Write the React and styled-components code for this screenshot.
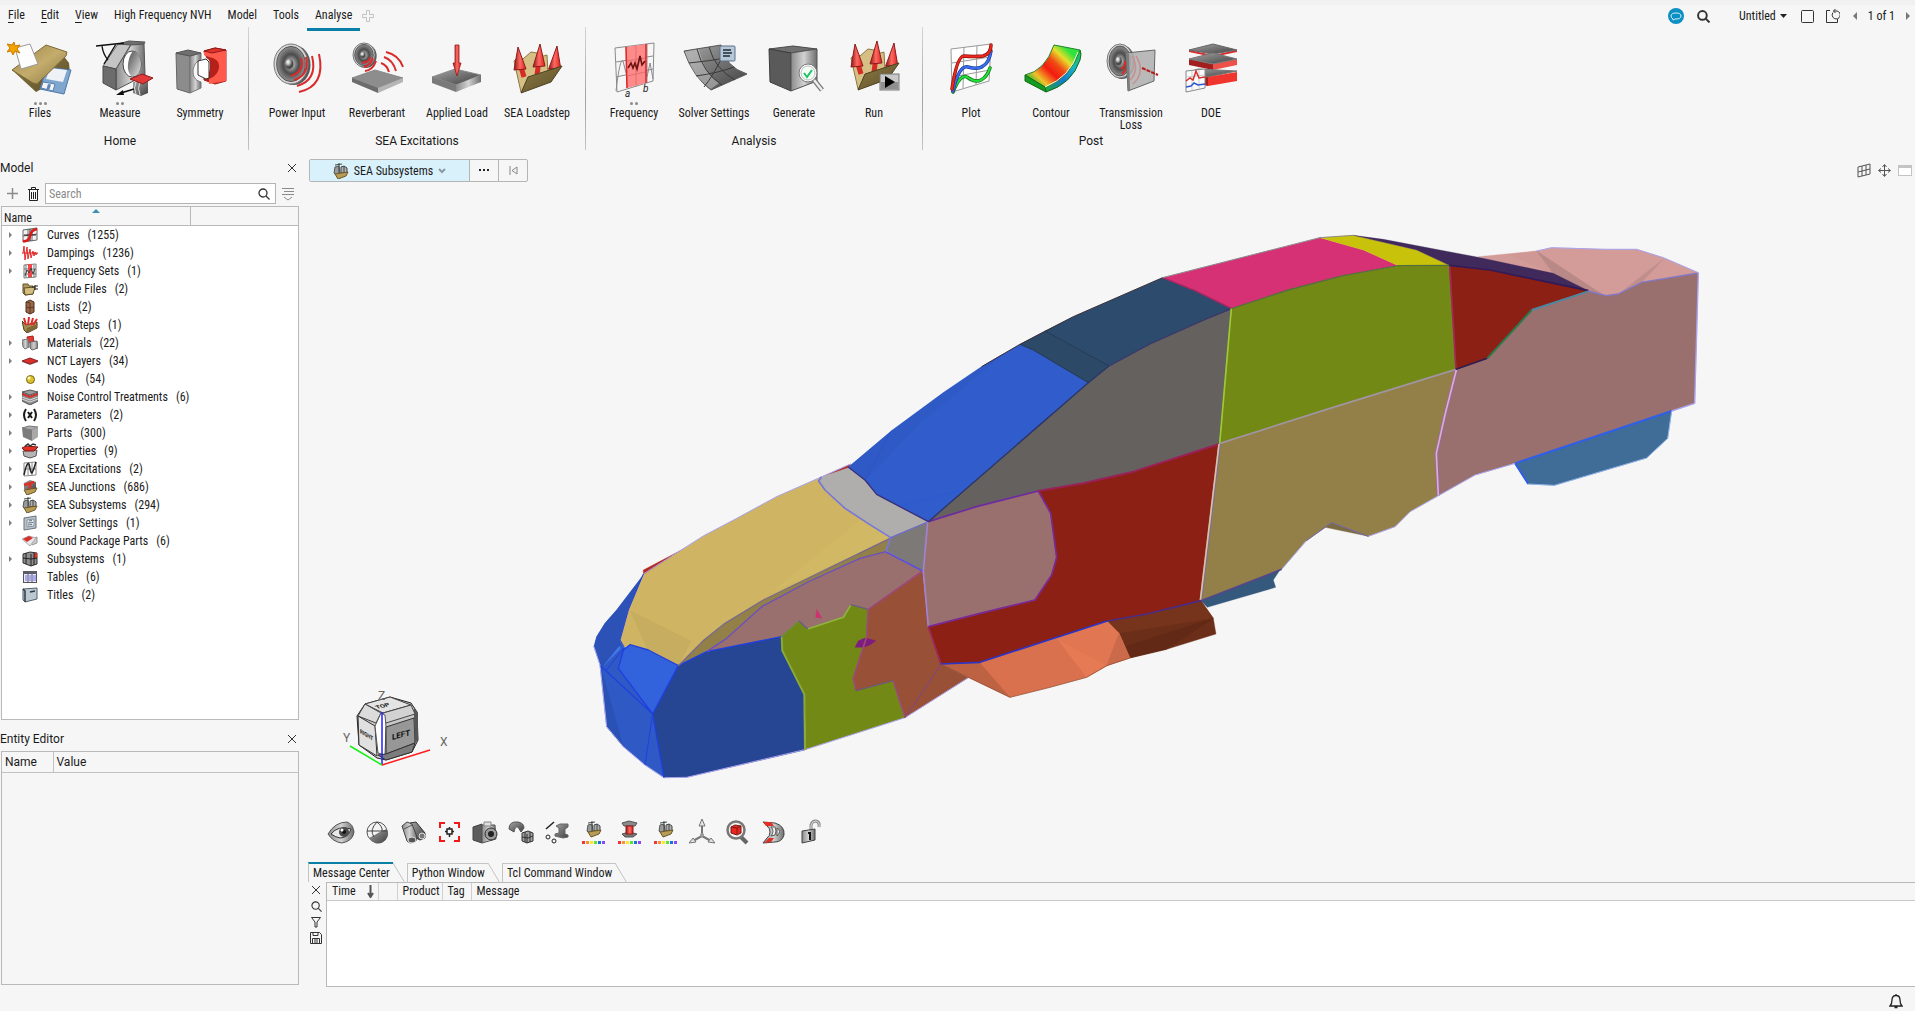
import styled, { createGlobalStyle } from "styled-components";

const GlobalStyle = createGlobalStyle`
  * {
    box-sizing: border-box;
  }

  body {
    margin: 0;
    background: #f6f6f6;
    color: #1a1a1a;
    font-family: "Roboto Condensed", Roboto, "Liberation Sans", sans-serif;
    font-size: 12px;
    line-height: 18px;
  }

  button {
    padding: 0;
    border: 0;
    background: none;
    color: inherit;
    font: inherit;
    cursor: pointer;
  }

  svg {
    display: block;
    flex: none;
  }
`;

const Window = styled.div`
  min-height: 100vh;
  display: flex;
  flex-direction: column;
`;

const TitleStrip = styled.div`
  height: 5px;
  background: #f1f1f1;
`;

/* ---------- menu ---------- */

const MenuBar = styled.header`
  height: 26px;
  display: flex;
  align-items: stretch;
  justify-content: space-between;
`;

const Menus = styled.nav`
  display: flex;
  align-items: stretch;
`;

const MenuButton = styled.button`
  padding: 1px 8px 4px;
  border-bottom: 3px solid ${(p) => (p.$active ? "#0a7fa6" : "transparent")};

  u {
    text-underline-offset: 3px;
  }
`;

const AddPage = styled.button`
  padding: 0 2px 4px;
  display: flex;
  align-items: center;
`;

const SessionBar = styled.div`
  height: 22px;
  padding-right: 5px;
  display: flex;
  align-items: center;
`;

const IconButton = styled.button`
  display: flex;
  align-items: center;
  justify-content: center;
  gap: 4px;
  margin-right: ${(p) => p.$after || 0}px;
`;

const PageCount = styled.span`
  margin: 0 11px;
`;

/* ---------- ribbon ---------- */

const Ribbon = styled.div`
  height: 123px;
  display: flex;
`;

const Group = styled.section`
  position: relative;
  padding: 8px 9px 0 ${(p) => (p.$first ? 0 : 8)}px;
  display: flex;
  flex-direction: column;
  justify-content: space-between;

  &:not(:last-child)::after {
    content: "";
    position: absolute;
    right: 0;
    top: -4px;
    bottom: 4px;
    width: 1px;
    background: linear-gradient(#d4d4d4, #a2a2a2 60%, #c4c4c4);
  }
`;

const GroupTools = styled.div`
  display: flex;
  align-items: flex-start;
`;

const GroupLabel = styled.h2`
  margin: 0 0 4px;
  font-family: Roboto, "Liberation Sans", sans-serif;
  font-size: 12px;
  font-weight: 400;
  line-height: 18px;
  text-align: center;
`;

const Tool = styled.button`
  width: 80px;
  display: flex;
  flex-direction: column;
  align-items: center;
  line-height: 12px;
`;

const Dots = styled.span`
  height: 8px;
  display: flex;
  align-items: center;
  gap: 2px;

  i {
    width: 3px;
    height: 3px;
    border-radius: 50%;
    background: #8a8a8a;
  }
`;

/* ---------- main area ---------- */

const Workspace = styled.div`
  flex: 1;
  display: flex;
`;

const Sidebar = styled.aside`
  width: 300px;
  flex: none;
  padding: 4px 1px 2px 0;
  display: flex;
  flex-direction: column;
`;

const PanelHead = styled.div`
  height: 20px;
  margin-top: ${(p) => (p.$spaced ? 9 : 0)}px;
  padding-right: 1px;
  display: flex;
  align-items: center;
  justify-content: space-between;

  h2 {
    margin: 0;
    font-family: Roboto, "Liberation Sans", sans-serif;
    font-size: 12px;
    font-weight: 400;
  }
`;

const SearchRow = styled.div`
  height: 28px;
  padding: 5px 5px 2px 7px;
  display: flex;
  align-items: center;
`;

const SearchBox = styled.label`
  flex: 1;
  height: 21px;
  margin: 0 6px;
  padding: 0 5px 0 3px;
  display: flex;
  align-items: center;
  background: #fff;
  border: 1px solid #b4b4b4;

  input {
    flex: 1;
    min-width: 0;
    padding: 0;
    border: 0;
    outline: 0;
    font: inherit;
  }

  input::placeholder {
    color: #8a8a8a;
  }
`;

const TreeBox = styled.div`
  height: 514px;
  margin-left: 1px;
  background: #fff;
  border: 1px solid #b9b9b9;
`;

const TreeTable = styled.table`
  width: 100%;
  border-collapse: collapse;
  table-layout: fixed;

  th {
    position: relative;
    height: 18px;
    padding: 3px 2px 0;
    background: #f6f6f6;
    border-bottom: 1px solid #b9b9b9;
    font-weight: 400;
    line-height: 14px;
    text-align: left;
    vertical-align: bottom;
  }

  th:first-child {
    width: 188px;
    border-right: 1px solid #b9b9b9;
  }

  td {
    height: 18px;
    padding: 0;
  }
`;

const SortMark = styled.span`
  position: absolute;
  left: 50%;
  top: 2px;
  margin-left: -4px;
  border: 4px solid transparent;
  border-top: 0;
  border-bottom: 4px solid #3f8fb3;
`;

const TreeItem = styled.div`
  height: 18px;
  padding-left: 4px;
  display: flex;
  align-items: center;
  white-space: nowrap;

  > svg {
    margin-right: 9px;
  }
`;

const Expander = styled.button`
  width: 16px;
  height: 18px;
  display: flex;
  align-items: center;
  padding-left: 3px;
  visibility: ${(p) => (p.$hidden ? "hidden" : "visible")};
`;

const Count = styled.span`
  margin-left: 8px;
`;

const EditorBox = styled.div`
  flex: 1;
  margin: 2px 0 24px 1px;
  border: 1px solid #b9b9b9;
`;

const EditorTable = styled.table`
  width: 100%;
  border-collapse: collapse;

  th {
    height: 20px;
    padding: 0 3px;
    border-bottom: 1px solid #c2c2c2;
    font-family: Roboto, "Liberation Sans", sans-serif;
    font-weight: 400;
    text-align: left;
  }

  th:first-child {
    width: 51px;
    border-right: 1px solid #c2c2c2;
  }
`;

const Content = styled.main`
  flex: 1;
  min-width: 0;
  padding: 5px 0 0 8px;
  display: flex;
  flex-direction: column;
`;

const ViewBar = styled.div`
  height: 23px;
  padding: 0 3px 0 1px;
  display: flex;
  align-items: center;
  justify-content: space-between;
`;

const ViewTabs = styled.div`
  height: 23px;
  display: flex;
  border: 1px solid #b5b5b5;
  border-radius: 2px;
`;

const ViewTab = styled.button`
  width: ${(p) => p.$width}px;
  display: flex;
  align-items: center;
  justify-content: center;
  gap: 5px;
  background: ${(p) => (p.$active ? "#d9f1fb" : "transparent")};

  & + & {
    border-left: 1px solid #b5b5b5;
  }
`;

const ViewActions = styled.div`
  display: flex;
  align-items: center;
  gap: 7px;
`;

const Scene = styled.div`
  flex: 1;
  min-height: 0;

  svg {
    width: 100%;
    height: 100%;
  }
`;

const DisplayBar = styled.div`
  height: 40px;
  padding-left: 15px;
  display: flex;
  align-items: center;
`;

const DisplayButton = styled.button`
  width: 36px;
  height: 30px;
  display: flex;
  align-items: center;
  justify-content: center;
`;

const DockTabs = styled.div`
  margin-top: 10px;
  height: 20px;
  display: flex;
  align-items: flex-end;
  gap: 3px;
`;

const DockTab = styled.button`
  position: relative;
  height: ${(p) => (p.$active ? 20 : 19)}px;
  padding: 0 3px 0 4px;
  margin-right: 11px;
  border-left: 1px solid #c4c4c4;
  border-top: ${(p) => (p.$active ? "2px solid #0a7fa6" : "1px solid #c4c4c4")};

  svg {
    position: absolute;
    left: 100%;
    top: -1px;
  }
`;

const Dock = styled.div`
  height: 105px;
  display: flex;
`;

const DockSide = styled.div`
  width: 18px;
  padding: 2px 2px 0 0;
  display: flex;
  flex-direction: column;
  align-items: center;
  gap: 4px;

  button {
    height: 12px;
  }
`;

const LogBox = styled.div`
  flex: 1;
  background: #fff;
  border: 1px solid #b9b9b9;
  border-right: 0;
`;

const LogTable = styled.table`
  width: 100%;
  border-collapse: collapse;
  table-layout: fixed;
  background: #f6f6f6;

  th {
    height: 17px;
    padding: 1px 0 0 5px;
    border-bottom: 1px solid #c8c8c8;
    border-right: 1px solid #d0d0d0;
    font-weight: 400;
    line-height: 15px;
    text-align: left;
  }

  th:last-child {
    border-right: 0;
  }
`;

const TimeHead = styled.span`
  display: flex;
  align-items: center;
  justify-content: space-between;
  padding-right: 4px;
`;

const StatusBar = styled.footer`
  height: 24px;
  padding: 5px 12px 0 0;
  display: flex;
  align-items: center;
  justify-content: flex-end;
`;

/* ---------- shared drawing parts ---------- */

const DefsCanvas = styled.svg`
  position: absolute;
`;

function Defs() {
  return (
    <DefsCanvas width="0" height="0" aria-hidden="true">
      <defs>
        <linearGradient id="tan" x1="0" y1="0" x2="1" y2="1">
          <stop offset="0" stopColor="#9c8444" />
          <stop offset=".5" stopColor="#c4ad6c" />
          <stop offset="1" stopColor="#8a7540" />
        </linearGradient>
        <linearGradient id="tanDark" x1="0" y1="0" x2="1" y2="1">
          <stop offset="0" stopColor="#8d7a45" />
          <stop offset="1" stopColor="#5d4f28" />
        </linearGradient>
        <linearGradient id="steel" x1="0" y1="0" x2="1" y2="0">
          <stop offset="0" stopColor="#8b8b8b" />
          <stop offset=".5" stopColor="#d2d2d2" />
          <stop offset="1" stopColor="#6d6d6d" />
        </linearGradient>
        <linearGradient id="steelDark" x1="0" y1="0" x2="1" y2="1">
          <stop offset="0" stopColor="#a5a5a5" />
          <stop offset="1" stopColor="#3f3f3f" />
        </linearGradient>
        <linearGradient id="bore" x1="0" y1="0" x2="1" y2="1">
          <stop offset="0" stopColor="#4f4f4f" />
          <stop offset="1" stopColor="#e6e6e6" />
        </linearGradient>
        <linearGradient id="red" x1="0" y1="0" x2="1" y2="0">
          <stop offset="0" stopColor="#8d1717" />
          <stop offset=".5" stopColor="#ff6a62" />
          <stop offset="1" stopColor="#d9201c" />
        </linearGradient>
        <linearGradient id="heat" gradientUnits="userSpaceOnUse" x1="14" y1="44" x2="50" y2="6">
          <stop offset="0" stopColor="#32b62c" />
          <stop offset=".17" stopColor="#f0c22a" />
          <stop offset=".4" stopColor="#f31a10" />
          <stop offset=".58" stopColor="#f04a14" />
          <stop offset=".76" stopColor="#e9de2a" />
          <stop offset=".93" stopColor="#2fe33c" />
        </linearGradient>
        <linearGradient id="heatEdge" x1="0" y1="1" x2="1" y2="0">
          <stop offset="0" stopColor="#1fae2c" />
          <stop offset=".4" stopColor="#1579d0" />
          <stop offset=".7" stopColor="#18b6c4" />
          <stop offset="1" stopColor="#22c43c" />
        </linearGradient>
        <radialGradient id="cone">
          <stop offset="0" stopColor="#f4f4f4" />
          <stop offset=".3" stopColor="#8a8a8a" />
          <stop offset=".55" stopColor="#4c4c4c" />
          <stop offset="1" stopColor="#8f8f8f" />
        </radialGradient>
        <radialGradient id="ball" cx=".35" cy=".3">
          <stop offset="0" stopColor="#fff" />
          <stop offset=".5" stopColor="#b5b5b5" />
          <stop offset="1" stopColor="#4a4a4a" />
        </radialGradient>
      </defs>
    </DefsCanvas>
  );
}

const poly = (fill, points, stroke) => (
  <polygon key={points} points={points} fill={fill} stroke={stroke} strokeLinejoin="round" />
);

function LoadFolder({ dy = 0 }) {
  const arrows = [
    [14, 8, 20, 38],
    [36, 5, 33, 36],
    [53, 7, 46, 33],
  ];
  return (
    <g transform={`translate(0 ${dy})`}>
      {poly("#d5bf84", "10,22 14,18 19,20 27,13 33,14 36,18 43,16 44,34 17,53", "#8d7742")}
      {arrows.map(([x, y, bx, by]) => (
        <g key={x}>
          <line x1={x + (bx - x) * 0.5} y1={y + 20} x2={bx} y2={by} stroke="#d52a26" strokeWidth="5" />
          {poly("url(#red)", `${x},${y} ${x + 6 + (bx - x) / 3},${y + 22} ${x - 6 + (bx - x) / 3},${y + 23}`, "#8f1b1b")}
        </g>
      ))}
      {poly("url(#tanDark)", "24,38 58,27 47,43 17,54", "#4c4122")}
    </g>
  );
}

function Speaker({ cx, cy, rx, ry }) {
  return (
    <g>
      <ellipse cx={cx + rx * 0.15} cy={cy + 1} rx={rx} ry={ry} fill="#5a5a5a" />
      <ellipse cx={cx} cy={cy} rx={rx} ry={ry} fill="#d6d6d6" stroke="#777" />
      <ellipse cx={cx} cy={cy} rx={rx * 0.84} ry={ry * 0.88} fill="url(#cone)" stroke="#555" />
      <ellipse cx={cx - rx * 0.1} cy={cy} rx={rx * 0.25} ry={ry * 0.25} fill="url(#ball)" />
    </g>
  );
}

/* ribbon pictures share a 66 x 60 canvas */
const ribbonArt = {
  Files: (
    <>
      {poly("url(#tanDark)", "5,31 29,53 63,34 62,24 56,16")}
      {poly("#7fa6cf", "40,28 64,31 57,55 33,50", "#4d78a8")}
      {poly("#eef1f5", "43,29 60,31 56,43 39,40")}
      {poly("#f4f4f4", "36,43 48,45 46,52 34,49", "#567fae")}
      <path d="M41 45l3 .5-1.500 5-3-.5z" fill="#5d86b5" />
      {poly("url(#tan)", "5,31 39,6 60,13 59,17 30,45 26,44", "#7d6936")}
      {poly("#fdfdfd", "8,9 23,5 31,25 14,30", "#9a9a9a")}
      {poly("#f5a300", "7,3 8,7 13,6 10,10 13,14 8,12 6,16 4,12 0,13 3,9 0,5 5,6", "#c77a00")}
    </>
  ),
  Measure: (
    <>
      {poly("#c4c4c4", "16,27 31,5 44,5 29,30", "#6a6a6a")}
      {poly("#6f6f6f", "31,5 42,2 58,3 57,5 44,6", "#555")}
      {poly("url(#steel)", "29,30 44,6 57,5 58,36 29,51", "#555")}
      {poly("#6c6c6c", "16,27 29,30 29,51 16,44", "#4a4a4a")}
      <ellipse cx="45" cy="25" rx="9" ry="13" fill="#fff" stroke="#444" />
      <path d="M46 12q8 2 8 13t-9 13q-5-5-4-13t5-13" fill="url(#bore)" />
      <path d="M9 7l28-3M21 21q-5-6-6-14M29 5L17 25" stroke="#111" strokeWidth="1.400" fill="none" />
      <path d="M46 43l15-1v12l-7 3-8-3z" fill="url(#steelDark)" />
      <path d="M49 43q-3 6 0 12M53 43q-3 6 0 13" stroke="#ddd" fill="none" />
      {poly("#e03a3a", "43,40 55,35 66,39 56,45", "#8f1b1b")}
      <path d="M47 50L34 54" stroke="#111" strokeWidth="1.500" />
      {poly("#111", "29,56 36,51 37,56")}
    </>
  ),
  Symmetry: (
    <>
      <path d="M9 14l14 3v37l-13-4z" fill="#8c8c8c" stroke="#666" />
      <path d="M23 17l11-3v6c-4 2-8 6-8 13 0 6 4 9 8 10v6l-11 5z" fill="url(#steel)" stroke="#777" />
      {poly("#6f6f6f", "9,14 21,11 34,14 23,17", "#555")}
      <path d="M37 12l11-3 11 2v31l-11 3-11-4v-4l5-14-5-10z" fill="#b5201a" stroke="#a51c18" />
      <path d="M37 12h22v30l-17 3v-5c6-2 10-7 10-13s-5-8-10-9l-5-2z" fill="#ff5a4c" />
      {poly("#e0322b", "37,12 48,9 59,11 45,14", "#8f1b1b")}
      <path d="M37 19c6 0 6 4 6 9s-2 8-6 10z" fill="#f6f6f6" />
      {poly("#fff", "31,22 39,20 42,23 42,39 39,40 31,36", "#333")}
    </>
  ),
  "Power Input": (
    <>
      <Speaker cx={27} cy={25} rx={17} ry={20} />
      <path
        d="M37 19q4 13-10 18M42 18q4 18-12 23M48 17q6 24-15 30M55 15q7 32-20 38"
        fill="none"
        stroke="#d92b2b"
        strokeWidth="2"
      />
    </>
  ),
  Reverberant: (
    <>
      <Speaker cx={20} cy={16} rx={11} ry={12} />
      <path
        d="M26 18q0 5-8 6M29 19q-2 7-9 9M32 22q-3 9-11 10M42 13q13 3 17 15M40 18q9 3 12 14M37 24q6 2 8 9"
        fill="none"
        stroke="#d92b2b"
        strokeWidth="2"
      />
      {poly("#8d8d8d", "8,39 31,31 59,39 34,49", "#888")}
      {poly("#6c6c6c", "8,39 34,49 34,54 8,43")}
      {poly("#b5b5b5", "34,49 59,39 59,43 34,54")}
    </>
  ),
  "Applied Load": (
    <>
      {poly("url(#steelDark)", "8,38 31,30 57,36 32,46", "#8a8a8a")}
      {poly("#7a7a7a", "8,38 32,46 32,53 8,44")}
      {poly("url(#steel)", "32,46 57,36 57,43 32,53")}
      <path d="M31 6h4v18h2l-4 13-4-13h2z" fill="url(#red)" stroke="#8f1b1b" strokeWidth=".8" />
    </>
  ),
  "SEA Loadstep": <LoadFolder />,
  Frequency: (
    <>
      <path
        d="M14 9l39-5-1 38-36 11zM15 23l37-6M15 38l37-8M35 6v42M46 5v39M15 52q4-34 7-30l3 12M46 38l3-14 3 16"
        fill="none"
        stroke="#8b8b8b"
      />
      {poly("#ff8a8a", "25,8 45,5 45,44 26,49")}
      <path d="M25 8l1 41M45 5v39" stroke="#d92b2b" strokeWidth="1.600" />
      <path d="M26 22l18-3M26 37l18-4M35 7v39" stroke="#dd7070" />
      <path d="M27 29l3-5 2 5 2-5 2 6 3-13 2 9 3-4" fill="none" stroke="#6e1111" strokeWidth="1.600" />
      <g fontFamily="Roboto" fontSize="10" fontStyle="italic" fill="#222">
        <text x="24" y="58">a</text>
        <text x="42" y="53">b</text>
      </g>
    </>
  ),
  "Solver Settings": (
    <>
      <path d="M3 12L40 6q4 22 26 29L30 51Q12 38 3 12z" fill="url(#steelDark)" stroke="#555" />
      <path d="M4 13l14-3q5 24 20 34l-8 6Q12 38 4 13z" fill="#c5c5c5" opacity=".55" />
      <path d="M16 10q6 24 25 36M28 8q6 22 26 33M8 24q20-2 37-5M15 37q22-3 38-9M43 14q-10 22-20 34" fill="none" stroke="#3a3a3a" />
      <rect x="39" y="7" width="15" height="15" rx="1" fill="#b6c8d8" stroke="#5b7187" />
      <path d="M42 11h8M42 14h9M42 17h7" stroke="#1e2a36" strokeWidth="1.500" />
    </>
  ),
  Generate: (
    <>
      {poly("#707070", "8,10 32,7 56,10 30,14", "#4b4b4b")}
      {poly("#5a5a5a", "8,10 30,14 30,52 9,43", "#3e3e3e")}
      {poly("url(#steel)", "30,14 56,10 56,42 30,52", "#555")}
      <path d="M53 41l8 10" stroke="#777" strokeWidth="5" />
      <path d="M53 41l8 10" stroke="#eee" strokeWidth="2.500" />
      <circle cx="47" cy="34" r="9" fill="#fff" stroke="#777" />
      <circle cx="47" cy="34" r="7" fill="#f4fff6" stroke="#bbb" />
      <path d="M43 34l3 4 5-7" fill="none" stroke="#1fc36a" strokeWidth="2" />
    </>
  ),
  Run: (
    <>
      <LoadFolder dy={-3} />
      <rect x="39" y="35" width="19" height="16" fill="#c8c8c8" stroke="#777" />
      <rect x="40" y="43" width="17" height="7" fill="#8f8f8f" />
      {poly("#000", "44,37 54,43 44,49")}
    </>
  ),
  Plot: (
    <>
      <path
        d="M13 10l40-5-2 37-37 11zM14 24l38-6M14 38l38-7M26 8l-1 41M39 7l-1 39"
        fill="#fff"
        stroke="#999"
      />
      <g fill="none" strokeLinecap="round">
        <path d="M15 53q7-18 14-15 8 6 14 3 6-3 9-12" stroke="#127a1a" strokeWidth="3.500" />
        <path d="M15 53q7-18 14-15 8 6 14 3 6-3 9-12" stroke="#22e03a" strokeWidth="2" />
        <path d="M15 52q6-26 15-24 11 3 15-1 6-3 8-15" stroke="#1c3f9c" strokeWidth="3.500" />
        <path d="M15 52q6-26 15-24 11 3 15-1 6-3 8-15" stroke="#3a6ef0" strokeWidth="2" />
        <path d="M14 50q5-33 12-33 10 1 19 0 8-2 8-11" stroke="#8c140f" strokeWidth="3.500" />
        <path d="M14 50q5-33 12-33 10 1 19 0 8-2 8-11" stroke="#f0281c" strokeWidth="2" />
      </g>
    </>
  ),
  Contour: (
    <>
      <path d="M62 11q2 3 0 10-8 24-34 32l-1-5Q54 36 62 11z" fill="url(#heatEdge)" stroke="#12691d" />
      <path d="M7 36Q27 32 36 6l26 5q-8 26-35 38z" fill="url(#heat)" stroke="#23812a" />
      {poly("#149c22", "7,36 27,48 28,53 7,42", "#0d6b16")}
      <path d="M27 48Q52 38 60 13" fill="none" stroke="#eef6ee" />
    </>
  ),
  "Transmission Loss": (
    <>
      <Speaker cx={22} cy={22} rx={13} ry={17} />
      <path d="M27 22q1 5-4 8M29 26q0 5-5 9" fill="none" stroke="#d92b2b" strokeWidth="2" />
      <polygon points="28,14 57,11 56,42 30,52" fill="#b0b0b0" fillOpacity=".88" stroke="#666" />
      {poly("#7d7d7d", "28,14 31,15 32,51 30,52")}
      <path d="M34 17q8 14-2 24M38 17q10 16-3 28" fill="none" stroke="#c98e8e" strokeWidth="1.500" />
      <path d="M44 29l16 7" stroke="#b51c1c" strokeWidth="2" strokeDasharray="4 1" />
    </>
  ),
  DOE: (
    <>
      {poly("#d92b2b", "11,11 35,16 59,11 59,13 35,18 11,13")}
      {poly("url(#steelDark)", "11,11 35,5 59,11 35,15", "#666")}
      {poly("#a31f1f", "11,20 35,25 35,31 11,26")}
      {poly("#f0504a", "35,25 59,20 59,26 35,31")}
      {poly("url(#steelDark)", "11,20 35,14 59,20 35,25", "#777")}
      {poly("#a31f1f", "11,33 30,37 30,47 11,43")}
      {poly("url(#steelDark)", "11,33 20,30 59,32 30,38", "#777")}
      {poly("#f0352f", "30,38 59,33 59,42 30,47")}
      {poly("#fbfbfb", "8,32 27,30 27,49 8,53", "#888")}
      <path d="M14 32v20M21 31v20M8 38l19-2" stroke="#bbb" strokeWidth=".7" />
      <path d="M8 42l4-3 3 2 3-9 3 7 6-1" fill="none" stroke="#d92b2b" strokeWidth="1.500" />
      <path d="M8 48l5-1 3-3 4 2 7-1" fill="none" stroke="#2f55d0" strokeWidth="1.500" />
    </>
  ),
};

/* tree pictures share a 16 x 16 canvas */
const folderBase = poly("#b89b55", "2,11 15,9 13,13 5,16", "#6b5828");
const treeArt = {
  Curves: (
    <>
      <path d="M1 3l14-2v12L1 15zM1 9l14-2M6 2v12M10 2v12" fill="#f2f2f2" stroke="#666" />
      <path d="M8 2v12M2 8h12" stroke="#222" />
      <path d="M1 14q6 1 7-5t7-7" fill="none" stroke="#e01818" strokeWidth="2.500" />
    </>
  ),
  Dampings: <path d="M1 8L2 1l1 14L5 2l1 12L8 4l1 9 2-7 1 5 1-4 1 3 1-2M0 8h16" fill="none" stroke="#e02a2a" />,
  "Frequency Sets": (
    <>
      <path d="M2 2l12-1v13L2 15zM2 6h12M2 11h12M4 2v12M12 2v12" fill="none" stroke="#777" />
      <path d="M6 1h4v13H6z" fill="#f04848" />
      <path d="M3 13l2-6 2 3 2-5 2 6 2-5" fill="none" stroke="#444" />
    </>
  ),
  "Include Files": (
    <>
      {poly("#b2985a", "1,3 6,3 7,5 11,5 11,13 3,14 1,12", "#5f5128")}
      {poly("#d3bd80", "2,7 13,6 11,13 3,14", "#5f5128")}
      <path d="M10 6h3M13 4v5M13 5h3M13 8h3" stroke="#222" />
    </>
  ),
  Lists: (
    <>
      {poly("#9a6848", "4,3 8,1 12,3 12,13 8,15 4,13", "#4b2f1e")}
      <path d="M4 3l4 1v11M4 8l4 1 4-1" fill="none" stroke="#5b3a26" />
    </>
  ),
  "Load Steps": (
    <>
      {poly("#a58b4d", "0,4 4,8 15,5 15,11 5,16 2,13", "#4e4220")}
      <path d="M2 1l2 7M7 0l-1 8M11 1L9 8M15 2l-4 6" stroke="#e02a2a" strokeWidth="2" />
      {poly("#7e6a39", "5,11 16,7 13,12 4,16")}
    </>
  ),
  Materials: (
    <>
      {poly("#e8382f", "5,2 11,1 12,7 6,8", "#a01f1a")}
      {poly("url(#steel)", "0,5 6,4 7,12 3,14 1,12", "#777")}
      {poly("url(#steel)", "8,7 15,6 16,13 10,15 8,13", "#666")}
    </>
  ),
  "NCT Layers": (
    <>
      {poly("#8f8f8f", "0,9 8,6 16,9 8,12")}
      {poly("#d9302a", "0,8 8,5 16,8 8,11", "#8e2020")}
    </>
  ),
  Nodes: (
    <>
      <circle cx="8.500" cy="8.500" r="4" fill="#dcc22a" stroke="#77661a" />
      <circle cx="7" cy="7" r="1.500" fill="#fff8c0" />
    </>
  ),
  "Noise Control Treatments": (
    <>
      {poly("#8a8a8a", "0,4 8,7 16,4 16,12 8,16 0,12", "#555")}
      <path d="M0 8l8 3 8-3M0 10l8 3 8-3" fill="none" stroke="#d8d8d8" />
      {poly("#9d9d9d", "0,3 8,1 16,3 8,6", "#555")}
      {poly("#d9302a", "0,4 8,7 16,4 16,6 8,9 0,6")}
    </>
  ),
  Parameters: (
    <g fill="none" stroke="#1a1a1a" strokeWidth="2">
      <path d="M4 2q-4 6 0 12M12 2q4 6 0 12M6 5l4 6M10 5l-4 6" />
    </g>
  ),
  Parts: (
    <>
      {poly("#aaa", "0,3 7,1 16,2 10,5", "#777")}
      {poly("#7c7c7c", "0,3 10,5 10,16 1,12")}
      {poly("#a9a9a9", "10,5 16,2 16,12 10,16")}
    </>
  ),
  Properties: (
    <>
      {poly("#b5b5b5", "1,8 15,7 14,13 8,15 2,13", "#555")}
      {poly("#e03028", "0,5 4,3 16,4 12,8 3,8", "#7c1a16")}
      <path d="M3 3l3-2 2 2 3-2 3 1" fill="none" stroke="#333" strokeWidth="1.500" />
    </>
  ),
  "SEA Excitations": (
    <>
      <path d="M2 2l12-1v13L2 15zM2 8h12M6 2v12M10 2v12" fill="#fff" stroke="#888" />
      <path d="M2 14Q5 0 7 3q2 10 3 9 2-4 4-11" fill="none" stroke="#222" strokeWidth="1.500" />
    </>
  ),
  "SEA Junctions": (
    <>
      {poly("url(#steelDark)", "2,4 8,1 14,3 14,10 6,12 2,10")}
      <path d="M2 6l10-3M8 3v7" stroke="#e03028" strokeWidth="2.500" />
      {folderBase}
    </>
  ),
  "SEA Subsystems": (
    <>
      {poly("#9a9a9a", "2,4 6,3 7,10 4,13 1,10", "#555")}
      {poly("#b0b0b0", "8,4 11,3 14,5 14,10 8,10", "#444")}
      <path d="M2 2l7-1M6 0v10M11 3v7" stroke="#3d4a44" />
      {folderBase}
    </>
  ),
  "Solver Settings": (
    <>
      {poly("#b9c2ca", "2,3 14,1 14,13 2,15", "#67737e")}
      {poly("#e6ebef", "5,5 12,4 12,11 5,12", "#8793a0")}
      <path d="M7 6l3-.5M6 8l5-.5M6 10l4-.5" stroke="#67737e" />
    </>
  ),
  "Sound Package Parts": (
    <>
      {poly("#c9c9c9", "8,6 15,4 15,10 10,12", "#999")}
      {poly("#e8e8e8", "0,6 7,3 14,5 8,13", "#aaa")}
      {poly("#d9302a", "1,6 7,3 11,5 5,9")}
    </>
  ),
  Subsystems: (
    <>
      {poly("#8d8d8d", "1,3 8,1 15,2 15,13 9,15 1,12", "#333")}
      {poly("#e03028", "12,2 15,2 15,7 12,8")}
      <path d="M1 7l8 1 6-1M4 2v11M9 3v12M12 2v12" stroke="#222" fill="none" />
    </>
  ),
  Tables: (
    <>
      <rect x="1.500" y="2.500" width="13" height="11" fill="#e9e9ff" stroke="#555" />
      <rect x="1" y="2" width="14" height="3" fill="#5c5c68" />
      <path d="M6 5v9M10 5v9" stroke="#555" />
      <path d="M3 7h2M3 9h2M3 11h2M7 7h2M7 9h2M7 11h2M11 7h3M11 9h3M11 11h3" stroke="#6a6af0" />
    </>
  ),
  Titles: (
    <>
      {poly("#b9c8d2", "1,2 15,1 15,12 3,15 1,13", "#53616b")}
      <path d="M1 2l2 2v11M8 5l5-1" fill="none" stroke="#2f3a42" strokeWidth="1.500" />
    </>
  ),
};

const Glyph = ({ art, size = 16 }) => (
  <svg width={size} height={size} viewBox="0 0 16 16" aria-hidden="true">
    {art}
  </svg>
);

const swatches = ["#f23535", "#f7913a", "#f5ec2e", "#5be23c", "#1a6fe8", "#8b4cf0"];

const Swatches = () =>
  swatches.map((c, i) => <rect key={c} x={3 + i * 4} y="23" width="3" height="3" fill={c} />);

/* display toolbar pictures share a 28 x 28 canvas */
const displayArt = {
  Visibility: (
    <>
      <path d="M1 16Q8 4 20 4q6 2 7 10-1 9-12 11Q6 24 1 16z" fill="url(#steel)" stroke="#555" />
      <path d="M4 16q7-9 20-5-3 9-11 9-5-1-9-4z" fill="#e9e9e9" stroke="#333" />
      <circle cx="17" cy="14" r="5" fill="#4b4b4b" />
      <circle cx="17" cy="14" r="2" fill="#111" />
      <circle cx="15" cy="12" r="1.500" fill="#fff" />
    </>
  ),
  "Shading mode": (
    <>
      <circle cx="14" cy="14" r="10" fill="#f4f4f4" stroke="#555" />
      <path d="M24 11a10 10 0 0 1-18 9q6-3 9-5 5-3 9-4z" fill="url(#steelDark)" />
      <path d="M4 13h20M14 4q-8 8-3 15M14 4q6 5 5 9" fill="none" stroke="#444" />
    </>
  ),
  Find: (
    <>
      <path d="M11 5l6-1 9 11v5l-5 2-4-2z" fill="url(#steelDark)" stroke="#333" />
      <path d="M3 8l5-4 5 2 5 13-1 4-6 2-3-2z" fill="url(#steel)" stroke="#444" />
      <ellipse cx="13" cy="22" rx="4" ry="3" fill="#555" stroke="#ddd" />
      <ellipse cx="23" cy="18" rx="3" ry="3" fill="#777" stroke="#ddd" />
      <path d="M5 11l8-4" stroke="#555" />
    </>
  ),
  "Fit view": (
    <>
      <path d="M5 10V5h5M19 5h5v5M24 18v5h-5M10 23H5v-5" fill="none" stroke="#f01818" strokeWidth="2" />
      <rect x="12" y="11" width="5" height="5" fill="none" stroke="#222" strokeWidth="1.500" />
      <path d="M14.500 9v2M14.500 16v3M10 13.500h2M17 13.500h2" stroke="#222" strokeWidth="1.500" />
    </>
  ),
  Snapshot: (
    <>
      <path d="M2 9l9-3v19l-9-3z" fill="#5c5c5c" stroke="#444" />
      <path d="M11 7h13l1 14-14 4z" fill="url(#steel)" stroke="#555" />
      <path d="M13 4h7v4h-7z" fill="#ddd" stroke="#888" />
      <circle cx="20" cy="16" r="6" fill="#9c9c9c" stroke="#333" />
      <circle cx="20" cy="16" r="3" fill="#222" />
    </>
  ),
  "Swap representation": (
    <>
      <path d="M2 11q0-8 9-7 6 1 6 6l-3 4-3-5q-3-1-4 5z" fill="url(#steelDark)" stroke="#555" />
      {poly("#a0a0a0", "15,15 21,13 26,15 26,23 20,25 15,23", "#333")}
      <path d="M15 19l6 1 5-2M20 16v9M18 14v10M23 14v10" stroke="#333" fill="none" />
    </>
  ),
  "Element options": (
    <>
      <path d="M3 11l8-7" stroke="#222" strokeWidth="1.500" />
      <circle cx="5" cy="19" r="2" fill="none" stroke="#222" />
      <circle cx="11" cy="23" r="2" fill="none" stroke="#222" />
      <path d="M13 8l4-2h8v3l-3 2v5l3 1v2l-5 1-8-2v-2l4-1v-5z" fill="url(#steelDark)" stroke="#666" />
    </>
  ),
  "Subsystem color": (
    <>
      <g transform="translate(7 3)">{treeArt["SEA Subsystems"]}</g>
      <Swatches />
    </>
  ),
  "Load color": (
    <>
      {poly("#8a8a8a", "7,5 14,3 22,5 20,8 9,8", "#555")}
      {poly("#777", "7,16 14,14 22,16 18,19 10,19", "#555")}
      <path d="M11 8h7v8h-7z" fill="url(#red)" stroke="#8f1b1b" />
      <Swatches />
    </>
  ),
  "Property color": (
    <>
      <g transform="translate(7 3)">{treeArt["SEA Subsystems"]}</g>
      <Swatches />
    </>
  ),
  Axes: (
    <>
      <path d="M15 18V6M15 18L4 24M15 18l11 6" stroke="#777" strokeWidth="2" />
      {poly("#e2e2e2", "15,1 18,8 12,8", "#777")}
      {poly("#e2e2e2", "2,25 6,20 9,24", "#777")}
      {poly("#e2e2e2", "28,25 24,20 21,24", "#777")}
      <circle cx="15" cy="17" r="2" fill="#999" />
    </>
  ),
  "Zoom part": (
    <>
      <path d="M18 19l6 6" stroke="#666" strokeWidth="4" />
      <circle cx="13" cy="12" r="8.500" fill="#f3f3f3" stroke="#777" strokeWidth="2.500" />
      {poly("#e8281f", "8,9 12,7 18,8 18,15 14,17 8,15", "#7c1a16")}
      <path d="M8 9l6 1v6M14 10l4-2" stroke="#7c1a16" fill="none" />
    </>
  ),
  "Section cut": (
    <>
      <path d="M4 4l12 1q10 3 9 12-2 7-9 7l-12 1 4-5q3-2 3-6t-3-6z" fill="url(#steel)" stroke="#444" />
      <path d="M4 4l8 0 3 4H7zM5 25l5-5h5l-3 4z" fill="#e03028" />
      <path d="M12 9q4 4 0 9l4-1q2-4 0-8zM18 10q5 3 0 8z" fill="#f6f6f6" stroke="#555" />
    </>
  ),
  Lock: (
    <>
      <path d="M16 12V7q1-4 5-4 4 1 3 6" fill="none" stroke="#888" strokeWidth="3" />
      <path d="M16 12V7q1-4 5-4 4 1 3 6" fill="none" stroke="#ddd" />
      <path d="M7 13l13-2v11L7 25z" fill="url(#steel)" stroke="#444" />
      <path d="M13 15h2v7" fill="none" stroke="#111" strokeWidth="2" />
    </>
  ),
};

/* ---------- scene ---------- */

const faces = [
  ["#7b6b3f", "2235,922 2255,908 2365,949"],
  ["#35597c", "1863,1142 2100,1050 2080,1080 2087,1102 1882,1162"],
  ["#6b2e18", "1582,1203 1700,1182 1863,1142 1900,1195 1908,1242 1760,1288 1650,1314 1617,1240"],
  ["#75341b", "1582,1203 1700,1182 1863,1142 1900,1195 1617,1240"],
  ["#622916", "1635,1280 1900,1195 1760,1288 1650,1314"],
  ["#da714e", "1082,1332 1200,1327 1430,1255 1582,1205 1617,1240 1650,1314 1580,1337 1520,1372 1410,1402 1290,1432"],
  ["#bd6344", "1082,1332 1200,1329 1290,1432"],
  ["#e67a55", "1430,1255 1582,1337 1520,1372"],
  ["#e07652", "1430,1255 1582,1205 1617,1240 1580,1337"],
  ["#cb6a4a", "1617,1240 1650,1314 1580,1337"],
  ["#3f6d97", "2805,730 3275,573 3263,655 3200,714 2923,796 2845,792"],
  ["#d39c98", "2695,110 2870,93 2915,83 3075,88 3170,88 3250,113 3355,158 3185,187 3115,222 3078,227 3025,213"],
  ["#cf9894", "2790,105 2870,93 2930,165"],
  ["#b88987", "2870,93 3070,225 3025,213 2920,160"],
  ["#c08e8b", "3250,118 3115,222 3140,208 3185,187"],
  ["#2f5ac6", "190,1065 110,1170 75,1210 50,1250 42,1280 60,1335 80,1520 130,1580 195,1635 252,1673 218,1482 295,1337 205,1290 150,1274 133,1285 120,1260 145,1172"],
  ["#2c52b8", "190,1065 110,1170 75,1210 50,1250 42,1280 65,1340 120,1285 120,1260 145,1172"],
  ["#2a52b5", "62,1338 80,1520 130,1580"],
  ["#3262dc", "150,1274 205,1290 295,1337 218,1482 115,1345 130,1290"],
  ["#4379ea", "118,1278 122,1286 72,1336"],
  ["#b22a22", "190,1050 320,982 190,1065"],
  ["#b22a22", "745,762 812,732 803,747 724,771"],
  ["#ceb463", "724,771 590,830 465,898 370,948 190,1065 145,1170 120,1260 133,1282 150,1274 205,1290 295,1337 372,1260 435,1210 550,1140 930,955 865,911 795,865 735,810 716,783"],
  ["#c6ad5f", "150,1172 333,1264 295,1337 205,1290"],
  ["#d1b865", "930,955 840,900 570,1120"],
  ["#928048", "295,1337 372,1260 435,1210 550,1140 930,955 918,995 840,1015 680,1088 545,1160 440,1255 380,1295"],
  ["#99706e", "380,1295 440,1255 545,1160 690,1083 840,1015 918,995 1028,1053 865,1168 812,1154 790,1192 683,1227 657,1203 605,1250"],
  ["#264593", "295,1337 380,1295 605,1250 607,1292 673,1423 675,1590 320,1672 252,1673 218,1482"],
  ["#728a15", "605,1250 657,1203 683,1227 790,1192 812,1154 865,1168 860,1250 820,1375 828,1412 940,1382 973,1493 678,1588 673,1423 607,1292"],
  ["#985037", "1028,1053 865,1168 860,1250 820,1375 828,1412 940,1382 975,1493 1165,1373 1083,1333 1045,1220"],
  ["#b0aead", "724,771 803,744 855,780 890,823 1043,906 932,953 865,911 795,865 735,810 716,783"],
  ["#7d7976", "932,953 1043,906 1030,1053 918,992"],
  ["#99706e", "1043,906 1190,862 1375,813 1412,880 1430,1012 1415,1065 1365,1140 1200,1180 1045,1220 1030,1053"],
  ["#8c2014", "1375,813 1510,790 1660,755 1918,672 1863,1142 1700,1182 1582,1203 1200,1327 1082,1332 1045,1220 1200,1180 1365,1140 1415,1065 1430,1012 1412,880"],
  ["#64615f", "1045,905 1525,488 1587,438 1710,372 1875,298 1955,266 1918,672 1660,755 1510,790 1375,813 1190,860"],
  ["#305ccc", "805,742 935,632 1090,518 1205,440 1320,373 1360,390 1525,488 1045,905 892,825 855,780"],
  ["#2f5ac6", "805,742 935,632 1090,518 1205,440 1270,402 1020,610 855,780"],
  ["#2c4968", "1320,373 1395,333 1587,438 1525,488 1360,390"],
  ["#2d4b6d", "1395,333 1480,290 1748,173 1845,212 1955,266 1875,298 1710,372 1587,438"],
  ["#d63175", "1748,173 2220,53 2350,90 2455,137 2290,167 2125,210 1955,266 1845,212"],
  ["#c9c20a", "2220,53 2320,46 2510,90 2608,136 2455,137 2350,90"],
  ["#402a5c", "2320,46 2410,58 2595,93 2695,112 2920,160 3025,212 2730,150 2608,136 2510,90"],
  ["#728a15", "1955,266 2125,210 2290,167 2455,138 2608,137 2628,448 2250,565 1920,670"],
  ["#8c2014", "2608,137 2730,150 3025,212 2855,270 2722,415 2628,448"],
  ["#99706e", "2628,448 2722,415 2855,270 3025,213 3078,227 3115,222 3185,187 3355,159 3344,550 2805,730 2685,765 2575,827 2568,700 2595,580"],
  ["#928048", "1920,670 2250,565 2628,448 2595,580 2568,700 2575,827 2490,875 2445,920 2365,949 2255,908 2178,963 2105,1048 1863,1142"],
  ["#7f1c80", "825,1282 835,1262 855,1254 888,1262 870,1275 850,1282"],
  ["#d03070", "710,1168 707,1192 726,1195"],
];

const seams = [
  ["#a9a3ee", 3, "190,1062 370,948 465,898 590,830 724,771 812,732"],
  ["#a9a3ee", 3, "42,1280 60,1335 80,1520 130,1580 195,1635 252,1673 320,1672 678,1588 975,1493 1165,1373"],
  ["#1f3fe0", 4, "62,1338 218,1482 115,1345 130,1290 150,1274 205,1290 295,1337 218,1482 252,1673"],
  ["#1f3fe0", 3, "218,1482 195,1635"],
  ["#1f3fe0", 3, "190,1062 145,1170 120,1260 133,1282 80,1350"],
  ["#1f3fe0", 4, "295,1337 380,1295 605,1250"],
  ["#7a6a8c", 4, "295,1337 372,1260 435,1210 550,1140 930,955"],
  ["#6a4fc0", 4, "380,1295 440,1255 545,1160 690,1083 840,1015 918,995"],
  ["#7777d8", 5, "724,771 716,783 735,810 795,865 865,911 932,953 918,992"],
  ["#5b4fd8", 5, "918,995 1028,1053"],
  ["#6b6bc8", 4, "932,953 1043,906"],
  ["#3a2f78", 4, "805,742 855,780 890,823 1045,905"],
  ["#8aa93a", 6, "605,1250 607,1292 673,1423 675,1590"],
  ["#6d8a3c", 5, "605,1250 657,1203"],
  ["#8eb63c", 5, "683,1227 790,1192 812,1156"],
  ["#6a5a88", 4, "657,1203 683,1227"],
  ["#6a5a88", 4, "812,1154 865,1168"],
  ["#9c4a78", 5, "1028,1053 865,1168 860,1250 820,1375 828,1412"],
  ["#6a5a78", 4, "828,1412 940,1382"],
  ["#9c4a78", 5, "940,1382 975,1493"],
  ["#7d4590", 3, "975,1493 1083,1333"],
  ["#a083d4", 5, "1043,906 1030,1053 1045,1220"],
  ["#9c2a5c", 5, "1045,1220 1083,1333"],
  ["#7a2a98", 5, "1045,1220 1200,1180 1365,1140 1415,1065 1430,1012 1412,880 1375,813"],
  ["#6e2aa0", 5, "1045,905 1190,860 1375,813"],
  ["#9a2058", 6, "1375,813 1510,790 1660,755 1918,672"],
  ["#2c3568", 4, "1045,905 1525,488 1587,438"],
  ["#203652", 3, "1320,373 1360,390 1525,488"],
  ["#203652", 3, "1395,333 1587,438"],
  ["#3a3768", 4, "1587,438 1710,372 1875,298 1955,266"],
  ["#3a2f38", 3, "1205,440 1320,373 1480,290 1748,173"],
  ["#a32660", 4, "1748,173 1845,212 1955,266"],
  ["#8c8c8c", 3, "1748,173 2220,53 2320,46"],
  ["#55703c", 4, "1955,266 2125,210 2290,167 2455,137 2608,136"],
  ["#9dc832", 5, "1954,266 1919,672"],
  ["#a094a0", 5, "1920,670 2250,565 2628,448"],
  ["#7d7096", 8, "1919,672 1863,1142"],
  ["#dcc0a0", 5, "1917,672 1861,1142"],
  ["#a3285c", 5, "2609,137 2628,448"],
  ["#321a58", 5, "2608,136 2730,150 3025,212"],
  ["#301c50", 5, "2628,448 2722,415"],
  ["#2b7a4c", 6, "2722,415 2855,270"],
  ["#4c86a0", 6, "2855,270 3025,214"],
  ["#8a6cb8", 9, "2629,450 2596,580 2569,700 2575,827"],
  ["#e8a8cc", 5, "2629,450 2596,580 2569,700 2575,827"],
  ["#8377c8", 4, "3025,213 3078,227 3115,222 3185,187 3355,159"],
  ["#a9a3ee", 4, "3355,159 3344,550 3275,573"],
  ["#a9a3ee", 3, "2870,93 2915,83 3075,88 3170,88 3250,113 3355,158"],
  ["#2f5fe8", 6, "2845,792 2805,730 3275,573"],
  ["#a9a3ee", 3, "2805,730 2685,765 2575,827 2490,875 2445,920 2365,949"],
  ["#6f62b0", 3, "2365,949 2255,908 2178,963"],
  ["#a9a3ee", 3, "2178,963 2105,1048"],
  ["#8fb0e8", 3, "3275,573 3263,655 3200,714 2923,796 2845,792"],
  ["#54458c", 5, "2105,1048 1863,1142"],
  ["#4a2c84", 5, "1863,1142 1700,1182 1582,1203"],
  ["#2a35c8", 5, "1582,1203 1200,1327 1082,1332"],
  ["#8a4a34", 2, "1082,1332 1290,1432 1410,1402 1520,1372 1580,1337 1650,1314"],
  ["#2a58d8", 2, "960,858 1140,812"],
  ["#2a50c0", 2, "855,780 935,632"],
];

function NavigationCube() {
  return (
    <g strokeLinejoin="round">
      {poly("#c9c9c9", "357,716 365,704 390,697 411,703 417,712 418,740 412,752 386,760 377,758 359,745", "#222")}
      {poly("#e4e4e4", "365,704 390,697 411,705 383,713", "#444")}
      {poly("#d2d2d2", "383,713 411,705 415,714 386,723", "#444")}
      {poly("#dcdcdc", "365,704 381,713 376,723 358,716", "#444")}
      {poly("#e0e0e0", "358,716 375,726 377,756 359,745", "#333")}
      {poly("#fff", "381,713 385,715 386,727 385,755 378,753 375,726", "#555")}
      {poly("#979797", "386,727 414,718 415,743 386,754", "#333")}
      {poly("#555", "414,707 418,713 418,740 415,743 414,718")}
      {poly("#7c7c7c", "378,755 386,754 415,743 412,752 386,760", "#333")}
      <g fontFamily="Roboto" fontWeight="700" fontSize="8" fill="#111">
        <text transform="matrix(1 -.27 0 1 392 740)">LEFT</text>
        <text fontSize="6" transform="matrix(.75 .45 0 1 360 733)">RIGHT</text>
        <text fontSize="7" transform="matrix(1 -.25 .5 .6 377 709)">TOP</text>
      </g>
      <path d="M382 765V712" stroke="#2020ff" strokeWidth="1.500" />
      <path d="M382 765l-32-19" stroke="#14f014" strokeWidth="1.500" />
      <path d="M382 765l48-15" stroke="#ff1c1c" strokeWidth="1.500" />
      <g fontFamily="Roboto" fontSize="12" fill="#666">
        <text x="378" y="700">Z</text>
        <text x="343" y="742">Y</text>
        <text x="440" y="746">X</text>
      </g>
    </g>
  );
}

function CarScene() {
  return (
    <svg viewBox="308 182 1607 630" preserveAspectRatio="xMinYMin meet" role="img" aria-label="SEA subsystems model">
      <g transform="translate(580 220) scale(.33333)">
        {faces.map(([fill, points], i) => (
          <polygon key={i} points={points} fill={fill} stroke={fill} strokeWidth="1" />
        ))}
        {seams.map(([stroke, width, points], i) => (
          <polyline key={i} points={points} fill="none" stroke={stroke} strokeWidth={width} strokeLinejoin="round" />
        ))}
      </g>
      <NavigationCube />
    </svg>
  );
}

/* ---------- data ---------- */

const groups = [
  { name: "Home", tools: ["Files", "Measure", "Symmetry"] },
  { name: "SEA Excitations", tools: ["Power Input", "Reverberant", "Applied Load", "SEA Loadstep"] },
  { name: "Analysis", tools: ["Frequency", "Solver Settings", "Generate", "Run"] },
  { name: "Post", tools: ["Plot", "Contour", "Transmission Loss", "DOE"] },
];

const dots = { Files: 3, Measure: 2, Frequency: 2 };

const entities = [
  ["Curves", 1255, true],
  ["Dampings", 1236, true],
  ["Frequency Sets", 1, true],
  ["Include Files", 2, false],
  ["Lists", 2, false],
  ["Load Steps", 1, false],
  ["Materials", 22, true],
  ["NCT Layers", 34, true],
  ["Nodes", 54, false],
  ["Noise Control Treatments", 6, true],
  ["Parameters", 2, true],
  ["Parts", 300, true],
  ["Properties", 9, true],
  ["SEA Excitations", 2, true],
  ["SEA Junctions", 686, true],
  ["SEA Subsystems", 294, true],
  ["Solver Settings", 1, true],
  ["Sound Package Parts", 6, false],
  ["Subsystems", 1, true],
  ["Tables", 6, false],
  ["Titles", 2, false],
];

const Cross = () => (
  <svg width="10" height="10" viewBox="0 0 10 10">
    <path d="M1 1l8 8M9 1L1 9" stroke="#333" />
  </svg>
);

const Lens = ({ size = 12, width = 1.3 }) => (
  <svg width={size} height={size} viewBox="0 0 12 12">
    <circle cx="5" cy="5" r="4" fill="none" stroke="#333" strokeWidth={width} />
    <path d="M8 8l3.500 3.500" stroke="#333" strokeWidth={width} />
  </svg>
);

function TopMenu() {
  return (
    <MenuBar>
      <Menus>
        <MenuButton><u>F</u>ile</MenuButton>
        <MenuButton><u>E</u>dit</MenuButton>
        <MenuButton><u>V</u>iew</MenuButton>
        <MenuButton>High Frequency NVH</MenuButton>
        <MenuButton>Model</MenuButton>
        <MenuButton>Tools</MenuButton>
        <MenuButton $active>Analyse</MenuButton>
        <AddPage aria-label="Add page">
          <svg width="12" height="12" viewBox="0 0 12 12">
            <path d="M4.500.5h3v4h4v3h-4v4h-3v-4h-4v-3h4z" fill="none" stroke="#c2c2c2" />
          </svg>
        </AddPage>
      </Menus>
      <SessionBar>
        <IconButton aria-label="Messages" $after={13}>
          <svg width="16" height="16" viewBox="0 0 16 16">
            <circle cx="8" cy="8" r="8" fill="#0c8fc2" />
            <path d="M5 11q-2-1-2-3 0-3 5-3t5 3q0 3-5 3H7l-2 1z" fill="none" stroke="#d8f0fa" />
          </svg>
        </IconButton>
        <IconButton aria-label="Search" $after={29}><Lens size={13} width={1.8} /></IconButton>
        <IconButton $after={14}>
          Untitled
          <svg width="7" height="4" viewBox="0 0 7 4"><path d="M0 0h7L3.500 4z" fill="#222" /></svg>
        </IconButton>
        <IconButton aria-label="Single window" $after={11}>
          <svg width="13" height="13" viewBox="0 0 13 13">
            <rect x=".5" y=".5" width="12" height="12" rx="1" fill="none" stroke="#333" />
          </svg>
        </IconButton>
        <IconButton aria-label="Reset window" $after={13}>
          <svg width="15" height="14" viewBox="0 0 15 14">
            <path d="M5 1.500H1.500v12h11V10M8 3.500a4 4 0 1 0 4-1.500H8.500M10.500 0l-2 2 2 2" fill="none" stroke="#333" />
          </svg>
        </IconButton>
        <IconButton aria-label="Previous page">
          <svg width="4" height="8" viewBox="0 0 4 8"><path d="M4 0v8L0 4z" fill="#777" /></svg>
        </IconButton>
        <PageCount>1 of 1</PageCount>
        <IconButton aria-label="Next page">
          <svg width="4" height="8" viewBox="0 0 4 8"><path d="M0 0v8l4-4z" fill="#777" /></svg>
        </IconButton>
      </SessionBar>
    </MenuBar>
  );
}

function ModelTree() {
  return (
    <TreeBox>
      <TreeTable>
        <thead>
          <tr>
            <th>Name<SortMark /></th>
            <th aria-label="Details" />
          </tr>
        </thead>
        <tbody>
          {entities.map(([name, count, expandable]) => (
            <tr key={name}>
              <td colSpan="2">
                <TreeItem>
                  <Expander $hidden={!expandable} aria-label={`Expand ${name}`}>
                    <svg width="4" height="6" viewBox="0 0 4 6"><path d="M0 0v6l3-3z" fill="#808080" /></svg>
                  </Expander>
                  <Glyph art={treeArt[name]} />
                  {name}
                  <Count>({count})</Count>
                </TreeItem>
              </td>
            </tr>
          ))}
        </tbody>
      </TreeTable>
    </TreeBox>
  );
}

function Left() {
  return (
    <Sidebar>
      <PanelHead>
        <h2>Model</h2>
        <IconButton aria-label="Close model browser" $after={1}><Cross /></IconButton>
      </PanelHead>
      <SearchRow>
        <IconButton aria-label="Create" $after={10}>
          <svg width="11" height="11" viewBox="0 0 11 11"><path d="M5.500 0v11M0 5.500h11" stroke="#8a8a8a" strokeWidth="1.500" /></svg>
        </IconButton>
        <IconButton aria-label="Delete">
          <svg width="11" height="14" viewBox="0 0 11 14">
            <path d="M0 2.500h11M3.500 2V.5h4V2M1.500 3v10.500h8V3M3.500 5v7M5.500 5v7M7.500 5v7" fill="none" stroke="#222" />
          </svg>
        </IconButton>
        <SearchBox>
          <input type="text" placeholder="Search" aria-label="Search" />
          <Lens />
        </SearchBox>
        <IconButton aria-label="Filter">
          <svg width="12" height="14" viewBox="0 0 12 14">
            <path d="M0 1.500h12M2 4.500h10M0 7.500h12M2 10l4 3 4-3" fill="none" stroke="#8a8a8a" />
          </svg>
        </IconButton>
      </SearchRow>
      <ModelTree />
      <PanelHead $spaced>
        <h2>Entity Editor</h2>
        <IconButton aria-label="Close entity editor" $after={1}><Cross /></IconButton>
      </PanelHead>
      <EditorBox>
        <EditorTable>
          <thead>
            <tr><th>Name</th><th>Value</th></tr>
          </thead>
        </EditorTable>
      </EditorBox>
    </Sidebar>
  );
}

const Slant = () => (
  <svg width="13" height="20" viewBox="0 0 13 20">
    <path d="M0 0l12 20" stroke="#c4c4c4" fill="none" />
  </svg>
);

function MessageDock() {
  return (
    <>
      <DockTabs>
        <DockTab $active>Message Center<Slant /></DockTab>
        <DockTab>Python Window<Slant /></DockTab>
        <DockTab>Tcl Command Window<Slant /></DockTab>
      </DockTabs>
      <Dock>
        <DockSide>
          <IconButton aria-label="Close messages"><Cross /></IconButton>
          <IconButton aria-label="Search messages"><Lens size={11} width={1.2} /></IconButton>
          <IconButton aria-label="Filter messages">
            <svg width="10" height="11" viewBox="0 0 10 11">
              <path d="M.5.5h9L6 5v5H4V5z" fill="none" stroke="#333" />
            </svg>
          </IconButton>
          <IconButton aria-label="Save messages">
            <svg width="12" height="12" viewBox="0 0 12 12">
              <path d="M.5.5h9l2 2v9H.5zM3 .5v3h5v-3M2.500 11.500v-5h7v5M4 8h4M4 10h4" fill="none" stroke="#333" />
            </svg>
          </IconButton>
        </DockSide>
        <LogBox>
          <LogTable>
            <colgroup>
              <col width="51" />
              <col width="19" />
              <col width="45" />
              <col width="29" />
              <col />
            </colgroup>
            <thead>
              <tr>
                <th>
                  <TimeHead>
                    Time
                    <svg width="7" height="13" viewBox="0 0 7 13"><path d="M3.500 0v11M1 8l2.500 4L6 8" fill="none" stroke="#555" strokeWidth="2" /></svg>
                  </TimeHead>
                </th>
                <th aria-label="Level" />
                <th>Product</th>
                <th>Tag</th>
                <th>Message</th>
              </tr>
            </thead>
          </LogTable>
        </LogBox>
      </Dock>
    </>
  );
}

export default function App() {
  return (
    <Window>
      <GlobalStyle />
      <Defs />
      <TitleStrip />
      <TopMenu />
      <Ribbon>
        {groups.map((group, i) => (
          <Group key={group.name} $first={i === 0}>
            <GroupTools>
              {group.tools.map((tool) => (
                <Tool key={tool}>
                  <svg width="66" height="60" viewBox="0 0 66 60" aria-hidden="true">
                    {ribbonArt[tool]}
                  </svg>
                  <Dots>
                    {Array.from({ length: dots[tool] || 0 }, (_, n) => <i key={n} />)}
                  </Dots>
                  {tool}
                </Tool>
              ))}
            </GroupTools>
            <GroupLabel>{group.name}</GroupLabel>
          </Group>
        ))}
      </Ribbon>
      <Workspace>
        <Left />
        <Content>
          <ViewBar>
            <ViewTabs>
              <ViewTab $width={159} $active>
                <Glyph art={treeArt["SEA Subsystems"]} />
                SEA Subsystems
                <svg width="8" height="6" viewBox="0 0 8 6"><path d="M1 1l3 3 3-3" fill="none" stroke="#8a9aa2" strokeWidth="2" /></svg>
              </ViewTab>
              <ViewTab $width={29} aria-label="More views">
                <svg width="11" height="3" viewBox="0 0 11 3"><path d="M0 0h2v2H0zM4 0h2v2H4zM8 0h2v2H8z" fill="#222" /></svg>
              </ViewTab>
              <ViewTab $width={29} aria-label="First view">
                <svg width="9" height="9" viewBox="0 0 9 9"><path d="M1 0v9M8 1v7L3 4.500z" fill="none" stroke="#888" /></svg>
              </ViewTab>
            </ViewTabs>
            <ViewActions>
              <IconButton aria-label="Grid">
                <svg width="14" height="15" viewBox="0 0 14 15">
                  <path d="M1 4l12-3v10L1 14zM1 9l12-3M5 3v10M9 2v10" fill="none" stroke="#555" />
                </svg>
              </IconButton>
              <IconButton aria-label="Pan">
                <svg width="13" height="13" viewBox="0 0 13 13">
                  <path d="M6.500 1v11M1 6.500h11M4.500 3l2-2.500 2 2.500M4.500 10l2 2.500 2-2.500M3 4.500L.5 6.500 3 8.500M10 4.500l2.500 2-2.500 2" fill="none" stroke="#555" />
                </svg>
              </IconButton>
              <IconButton aria-label="Maximize">
                <svg width="14" height="11" viewBox="0 0 14 11">
                  <rect x=".5" y=".5" width="13" height="10" fill="#fff" stroke="#c4c4c4" />
                  <rect width="14" height="3" fill="#c4c4c4" />
                </svg>
              </IconButton>
            </ViewActions>
          </ViewBar>
          <Scene><CarScene /></Scene>
          <DisplayBar>
            {Object.entries(displayArt).map(([name, art]) => (
              <DisplayButton key={name} aria-label={name}>
                <svg width="28" height="28" viewBox="0 0 28 28">{art}</svg>
              </DisplayButton>
            ))}
          </DisplayBar>
          <MessageDock />
          <StatusBar>
            <IconButton aria-label="Notifications">
              <svg width="14" height="15" viewBox="0 0 14 15">
                <path d="M1 12q2-2 2-6 0-4.500 4-4.500T11 6q0 4 2 6zM5.500 13.500h3M7 0v1.500" fill="none" stroke="#222" strokeWidth="1.300" />
              </svg>
            </IconButton>
          </StatusBar>
        </Content>
      </Workspace>
    </Window>
  );
}
